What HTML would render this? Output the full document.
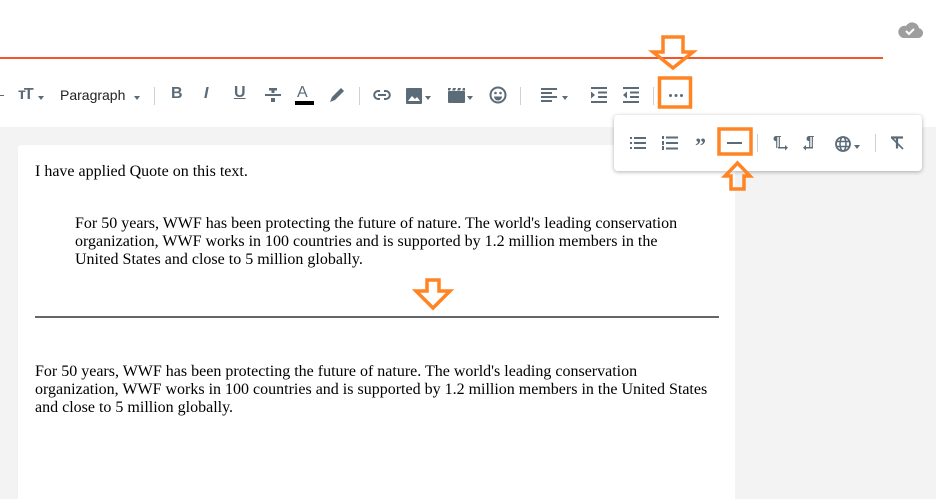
<!DOCTYPE html>
<html><head><meta charset="utf-8"><style>
*{margin:0;padding:0;box-sizing:border-box}
html,body{width:936px;height:499px;overflow:hidden;background:#fff;position:relative;font-family:"Liberation Sans",sans-serif}
.abs{position:absolute}
.txt{font-family:"Liberation Serif",serif;font-size:16px;line-height:18px;color:#000;white-space:nowrap}
.ic{position:absolute;fill:#5b6b78}
.sep{position:absolute;width:1px;height:18px;background:#d0d0d0}
.car{position:absolute;width:0;height:0;border-left:3.5px solid transparent;border-right:3.5px solid transparent;border-top:4px solid #5b6b78}
</style></head><body>
<div class="abs" style="left:0;top:57px;width:883px;height:1.5px;background:#f4552a"></div>
<svg class="abs" style="left:897px;top:21px" width="26" height="18" viewBox="0 0 26 18"><path d="M6 17h15a5 5 0 0 0 1-9.9A7 7 0 0 0 9 5a5.5 5.5 0 0 0-3 12z" fill="#9e9e9e"/><path d="M9 10l3 3 5-5" stroke="#fff" stroke-width="2" fill="none"/></svg>

<div class="abs" style="left:0;top:95px;width:4px;height:1px;background:#5b6b78"></div>
<div class="abs" style="left:18px;top:86px;font-weight:bold;font-size:16px;color:#5b6b78;letter-spacing:-2px">тТ</div>
<div class="car" style="left:38px;top:96px"></div>
<div class="abs" style="left:60px;top:87px;font-size:14px;color:#222">Paragraph</div>
<div class="car" style="left:134px;top:96px"></div>
<div class="sep" style="left:154px;top:87px"></div>
<div class="abs" style="left:171px;top:85px;font-weight:bold;font-size:16px;color:#5b6b78">B</div>
<div class="abs" style="left:204px;top:85px;font-weight:bold;font-style:italic;font-size:16px;color:#5b6b78">I</div>
<div class="abs" style="left:234px;top:84px;font-weight:bold;font-size:16px;color:#5b6b78;text-decoration:underline">U</div>
<svg class="ic" style="left:265px;top:88px" width="16" height="14"><rect x="4" y="0" width="8" height="2.5"/><rect x="0" y="6" width="16" height="2"/><rect x="6" y="10" width="4" height="4"/><rect x="6.5" y="2" width="3" height="3"/></svg>
<div class="abs" style="left:297px;top:84px;font-size:16px;color:#5b6b78">A</div>
<div class="abs" style="left:295px;top:101px;width:19px;height:4px;background:#000"></div>
<svg class="ic" style="left:328px;top:86px" width="18" height="18" viewBox="0 0 18 18"><path d="M2 16l2-5 9-9 3 3-9 9z"/></svg>
<div class="sep" style="left:359px;top:87px"></div>
<svg class="abs" style="left:373px;top:89px" width="18" height="12" viewBox="0 0 18 12"><rect x="1.2" y="2" width="15.6" height="8" rx="4" fill="none" stroke="#5b6b78" stroke-width="2"/><rect x="7" y="1" width="4" height="10" fill="#fff"/><rect x="5" y="5" width="8" height="2" fill="#5b6b78"/></svg>
<svg class="ic" style="left:406px;top:88px" width="16" height="16"><rect width="16" height="16" rx="1"/><path d="M2 13l4-5 3 3 2-2 3 4z" fill="#fff"/></svg>
<div class="car" style="left:425px;top:96px"></div>
<svg class="ic" style="left:448px;top:88px" width="17" height="15"><rect y="3" width="17" height="12" rx="1"/><rect y="0" width="17" height="2.5"/><path d="M3 0h2l-1 3H2zM8 0h2l-1 3H7zM13 0h2l-1 3h-2z" fill="#fff"/></svg>
<div class="car" style="left:467px;top:96px"></div>
<svg class="abs" style="left:489px;top:86px" width="18" height="18" viewBox="0 0 18 18"><circle cx="9" cy="9" r="7.5" fill="none" stroke="#5b6b78" stroke-width="2"/><circle cx="6.5" cy="7" r="1.3" fill="#5b6b78"/><circle cx="11.5" cy="7" r="1.3" fill="#5b6b78"/><path d="M5 10.5h8a4 4 0 0 1-8 0z" fill="#5b6b78"/></svg>
<div class="sep" style="left:520px;top:87px"></div>
<svg class="ic" style="left:541px;top:88px" width="16" height="14"><rect width="16" height="2"/><rect y="4" width="11" height="2"/><rect y="8" width="16" height="2"/><rect y="12" width="11" height="2"/></svg>
<div class="car" style="left:562px;top:96px"></div>
<svg class="ic" style="left:591px;top:87px" width="16" height="16"><rect width="16" height="2"/><rect x="7" y="4.5" width="9" height="2"/><rect x="7" y="9" width="9" height="2"/><rect y="14" width="16" height="2"/><path d="M0 4.5l4 3.5-4 3.5z"/></svg>
<svg class="ic" style="left:623px;top:87px" width="16" height="16"><rect width="16" height="2"/><rect x="7" y="4.5" width="9" height="2"/><rect x="7" y="9" width="9" height="2"/><rect y="14" width="16" height="2"/><path d="M4 4.5l-4 3.5 4 3.5z"/></svg>
<div class="sep" style="left:653px;top:87px"></div>
<svg class="ic" style="left:669px;top:94px" width="14" height="3"><circle cx="1.5" cy="1.5" r="1.5"/><circle cx="7" cy="1.5" r="1.5"/><circle cx="12.5" cy="1.5" r="1.5"/></svg>

<div class="abs" style="left:0;top:127px;width:936px;height:372px;background:#f3f3f3"></div>
<div class="abs" style="left:18px;top:145px;width:717px;height:360px;background:#fff;border-radius:3px"></div>

<div class="txt abs" style="left:35px;top:163px">I have applied Quote on this text.</div>
<div class="txt abs" style="left:75px;top:215px">For 50 years, WWF has been protecting the future of nature. The world's leading conservation<br>organization, WWF works in 100 countries and is supported by 1.2 million members in the<br>United States and close to 5 million globally.</div>
<div class="abs" style="left:35px;top:316px;width:684px;height:2px;background:#666"></div>
<div class="txt abs" style="left:35px;top:363px">For 50 years, WWF has been protecting the future of nature. The world's leading conservation<br>organization, WWF works in 100 countries and is supported by 1.2 million members in the United States<br>and close to 5 million globally.</div>

<div class="abs" style="left:614px;top:115px;width:308px;height:56px;background:#fff;border-radius:4px;box-shadow:0 1px 4px rgba(0,0,0,.3)"></div>
<svg class="ic" style="left:630px;top:137px" width="16" height="12"><rect width="2" height="2"/><rect x="4" width="12" height="2"/><rect y="5" width="2" height="2"/><rect x="4" y="5" width="12" height="2"/><rect y="10" width="2" height="2"/><rect x="4" y="10" width="12" height="2"/></svg>
<svg class="ic" style="left:662px;top:136px" width="16" height="14"><rect width="2" height="3"/><rect x="4" y="0.5" width="12" height="2"/><rect y="5" width="2" height="4"/><rect x="4" y="6" width="12" height="2"/><rect y="10" width="2" height="4"/><rect x="4" y="11.5" width="12" height="2"/></svg>
<div class="abs" style="left:695px;top:133px;font-family:'Liberation Serif',serif;font-weight:bold;font-size:22px;color:#5b6b78;letter-spacing:-1px">”</div>
<div class="abs" style="left:727px;top:142px;width:15px;height:1.5px;background:#5b6b78"></div>
<div class="sep" style="left:757px;top:134px"></div>
<div class="abs" style="left:773px;top:133px;font-weight:bold;font-size:15px;color:#5b6b78">¶</div>
<svg class="ic" style="left:778px;top:145px" width="10" height="6"><rect y="2" width="7" height="1.5"/><path d="M7 0l3 2.75-3 2.75z"/></svg>
<div class="abs" style="left:806px;top:133px;font-weight:bold;font-size:15px;color:#5b6b78">¶</div>
<svg class="ic" style="left:803px;top:145px" width="10" height="6"><rect x="3" y="2" width="7" height="1.5"/><path d="M3 0l-3 2.75 3 2.75z"/></svg>
<svg class="abs" style="left:835px;top:136px" width="16" height="16" viewBox="0 0 16 16"><circle cx="8" cy="8" r="7" fill="none" stroke="#5b6b78" stroke-width="1.8"/><ellipse cx="8" cy="8" rx="3" ry="7" fill="none" stroke="#5b6b78" stroke-width="1.5"/><path d="M1 5.5h14M1 10.5h14" stroke="#5b6b78" stroke-width="1.5"/></svg>
<div class="car" style="left:854px;top:145px"></div>
<div class="sep" style="left:875px;top:134px"></div>
<svg class="abs" style="left:890px;top:136px" width="15" height="14" viewBox="0 0 15 14"><path d="M1 1.5h12M7 1.5v11" stroke="#5b6b78" stroke-width="2.2"/><path d="M2 2l11 11" stroke="#5b6b78" stroke-width="1.6"/></svg>

<svg class="abs" style="left:0;top:0" width="936" height="499">
<g fill="none" stroke="#ff8424" stroke-width="3.5">
<polygon points="663,37 683,37 683,52 693,52 673,68 653,52 663,52"/>
<rect x="659.5" y="78" width="31" height="29"/>
<rect x="719" y="129" width="32" height="25"/>
<polygon points="731,189 744,189 744,176 750,176 737.5,163 725,176 731,176"/>
<polygon points="427,280 439,280 439,291 450,291 433,308 416,291 427,291"/>
</g></svg>
</body></html>
